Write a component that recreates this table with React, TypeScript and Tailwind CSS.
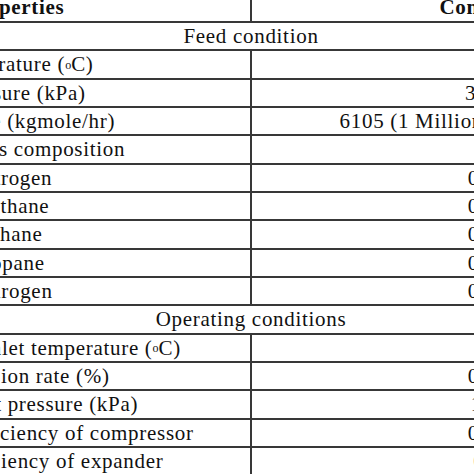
import React from 'react';

type Row = {
  label?: React.ReactNode;
  value?: string;
  section?: string;
  h: string;
  pl?: string;
};

const Deg = () => <span className="text-[12px] tracking-normal">o</span>;

const rows: Row[] = [
  { section: 'Feed condition', h: 'h-[28px]' },
  { label: <>Temperature (<Deg />C)</>, value: '25', h: 'h-[29px]', pl: 'pl-[159px]' },
  { label: 'Pressure (kPa)', value: '3500', h: 'h-[28px]', pl: 'pl-[175px]' },
  { label: 'Flow rate (kgmole/hr)', value: '6105 (1 Million tonnes per year)', h: 'h-[28px]', pl: 'pl-[136px]' },
  { label: 'Gas composition', value: '', h: 'h-[29px]', pl: 'pl-[194px]' },
  { label: 'Nitrogen', value: '0.04', h: 'h-[28px]', pl: 'pl-[193px]' },
  { label: 'Methane', value: '0.89', h: 'h-[28px]', pl: 'pl-[192px]' },
  { label: 'Ethane', value: '0.05', h: 'h-[29px]', pl: 'pl-[201px]' },
  { label: 'Propane', value: '0.02', h: 'h-[28px]', pl: 'pl-[192px]' },
  { label: 'Hydrogen', value: '0.01', h: 'h-[28px]', pl: 'pl-[184px]' },
  { section: 'Operating conditions', h: 'h-[29px]' },
  { label: <>Inlet temperature (<Deg />C)</>, value: '40', h: 'h-[28px]', pl: 'pl-[204px]' },
  { label: 'Conversion rate (%)', value: '0.95', h: 'h-[28px]', pl: 'pl-[147px]' },
  { label: 'Outlet pressure (kPa)', value: '150', h: 'h-[29px]', pl: 'pl-[166px]' },
  { label: 'Efficiency of compressor', value: '0.75', h: 'h-[28px]', pl: 'pl-[186px]' },
  { label: 'Efficiency of expander', value: '0.8', h: 'h-[28px]', pl: 'pl-[177px]' },
];

const App: React.FC = () => {
  return (
    <div className="w-[474px] h-[474px] overflow-hidden bg-white">
      <div className="w-[944px] -ml-[221px] -mt-[8px] font-['Liberation_Serif','Times_New_Roman',serif] text-[21px] tracking-[0.7px] text-[#111]">
        {/* header */}
        <div className="flex h-[31px] border-b-2 border-[#383838] font-bold">
          <div className="w-[473px] shrink-0 border-r-2 border-[#383838] text-center pt-[2px] leading-[27px]">Properties</div>
          <div className="flex-1 text-center pt-[2px] leading-[27px]">Condition</div>
        </div>

        {rows.map((r, i) =>
          r.section ? (
            <div key={i} className={`flex items-center justify-center ${r.h} border-b-2 border-[#383838] leading-none`}>
              {r.section}
            </div>
          ) : (
            <div key={i} className={`flex ${r.h} border-b-2 border-[#383838] leading-none`}>
              <div className={`w-[473px] shrink-0 flex items-center whitespace-nowrap border-r-2 border-[#383838] ${r.pl}`}>
                {r.label}
              </div>
              <div className="flex-1 flex items-center justify-center whitespace-nowrap">{r.value}</div>
            </div>
          )
        )}
      </div>
    </div>
  );
};

export default App;
